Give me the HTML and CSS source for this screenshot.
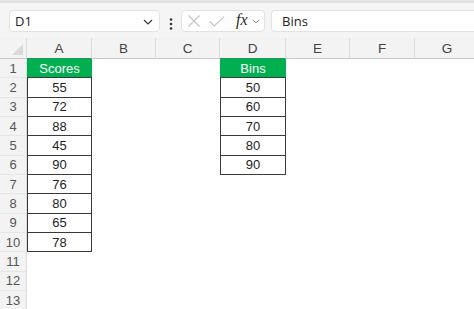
FILE: index.html
```html
<!DOCTYPE html>
<html>
<head>
<meta charset="utf-8">
<link rel="stylesheet" href="styles.css">
</head>
<body>
<div class="app">
  <div class="strip"></div>
  <div class="toolbar">
    <div class="namebox">
      <span class="name">D1</span>
      <svg class="chev" width="10" height="6" viewBox="0 0 10 6"><path d="M1 1 L5 5 L9 1" fill="none" stroke="#3a3a3a" stroke-width="1.2"/></svg>
    </div>
    <svg class="dots" width="4" height="12" viewBox="0 0 4 12"><circle cx="2" cy="1.5" r="1.3" fill="#333"/><circle cx="2" cy="6" r="1.3" fill="#333"/><circle cx="2" cy="10.5" r="1.3" fill="#333"/></svg>
    <div class="fxbox">
      <svg class="ico" width="14" height="12" viewBox="0 0 14 12"><path d="M1.5 0.5 L12.5 11.5 M12.5 0.5 L1.5 11.5" fill="none" stroke="#c4c4c4" stroke-width="1.1"/></svg>
      <svg class="ico" width="16" height="11" viewBox="0 0 16 11"><path d="M0.8 5.5 L5.2 10 L15.2 0.6" fill="none" stroke="#c4c4c4" stroke-width="1.1"/></svg>
      <span class="fx">fx</span>
      <svg class="smallchev" width="8" height="5" viewBox="0 0 8 5"><path d="M0.7 0.7 L4 4 L7.3 0.7" fill="none" stroke="#9a9a9a" stroke-width="1"/></svg>
    </div>
    <div class="formula">Bins</div>
  </div>
  <div class="sheet">
    <div class="corner"><span class="tri"></span></div>
    <div class="ch sel">A</div><div class="ch">B</div><div class="ch">C</div><div class="ch sel">D</div><div class="ch">E</div><div class="ch">F</div><div class="ch">G</div>

    <div class="rh">1</div><div class="c h">Scores</div><div class="c"></div><div class="c"></div><div class="c h">Bins</div><div class="c"></div><div class="c"></div><div class="c"></div>
    <div class="rh">2</div><div class="c b">55</div><div class="c"></div><div class="c"></div><div class="c b">50</div><div class="c"></div><div class="c"></div><div class="c"></div>
    <div class="rh">3</div><div class="c b">72</div><div class="c"></div><div class="c"></div><div class="c b">60</div><div class="c"></div><div class="c"></div><div class="c"></div>
    <div class="rh">4</div><div class="c b">88</div><div class="c"></div><div class="c"></div><div class="c b">70</div><div class="c"></div><div class="c"></div><div class="c"></div>
    <div class="rh">5</div><div class="c b">45</div><div class="c"></div><div class="c"></div><div class="c b">80</div><div class="c"></div><div class="c"></div><div class="c"></div>
    <div class="rh">6</div><div class="c b">90</div><div class="c"></div><div class="c"></div><div class="c b">90</div><div class="c"></div><div class="c"></div><div class="c"></div>
    <div class="rh">7</div><div class="c b">76</div><div class="c"></div><div class="c"></div><div class="c"></div><div class="c"></div><div class="c"></div><div class="c"></div>
    <div class="rh">8</div><div class="c b">80</div><div class="c"></div><div class="c"></div><div class="c"></div><div class="c"></div><div class="c"></div><div class="c"></div>
    <div class="rh">9</div><div class="c b">65</div><div class="c"></div><div class="c"></div><div class="c"></div><div class="c"></div><div class="c"></div><div class="c"></div>
    <div class="rh">10</div><div class="c b">78</div><div class="c"></div><div class="c"></div><div class="c"></div><div class="c"></div><div class="c"></div><div class="c"></div>
    <div class="rh">11</div><div class="c"></div><div class="c"></div><div class="c"></div><div class="c"></div><div class="c"></div><div class="c"></div><div class="c"></div>
    <div class="rh">12</div><div class="c"></div><div class="c"></div><div class="c"></div><div class="c"></div><div class="c"></div><div class="c"></div><div class="c"></div>
    <div class="rh">13</div><div class="c"></div><div class="c"></div><div class="c"></div><div class="c"></div><div class="c"></div><div class="c"></div><div class="c"></div>
  </div>
</div>
</body>
</html>
```
FILE: styles.css
```css
* { box-sizing: border-box; }
html, body { margin: 0; padding: 0; }
body {
  width: 474px;
  height: 309px;
  overflow: hidden;
  background: #ffffff;
  font-family: "Liberation Sans", Arial, sans-serif;
}
.app { width: 474px; overflow: hidden; }
.strip {
  height: 3px;
  background: #e2e2e2;
}
.toolbar {
  height: 35px;
  background: #f5f5f5;
  display: flex;
  align-items: flex-start;
  padding: 7px 0 0 9px;
  font-family: "Open Sans", "Noto Sans", sans-serif;
  font-size: 13px;
  color: #242424;
}
.namebox {
  width: 151px;
  height: 22px;
  background: #ffffff;
  border: 1px solid #e2e2e2;
  border-radius: 4px;
  display: flex;
  align-items: center;
  justify-content: space-between;
  padding: 0 6px 0 5px;
}
.chev { margin-top: 1px; }
.dots { margin: 8px 0 0 9px; }
.fxbox {
  margin-left: 8px;
  width: 84px;
  height: 22px;
  background: #ffffff;
  border: 1px solid #e2e2e2;
  border-radius: 4px;
  display: flex;
  align-items: center;
  padding-left: 5px;
}
.ico { margin-right: 8px; }
.fx {
  font-family: "Liberation Serif", "Times New Roman", serif;
  font-style: italic;
  font-size: 16px;
  color: #2a2a2a;
  margin-left: 3px;
  margin-top: -2px;
}
.smallchev { margin-left: 4px; margin-top: 1px; }
.formula {
  margin-left: 6px;
  flex: 1;
  height: 22px;
  background: #ffffff;
  border: 1px solid #e2e2e2;
  border-right: none;
  border-radius: 4px 0 0 4px;
  display: flex;
  align-items: center;
  padding-left: 10px;
}
.sheet {
  display: grid;
  grid-template-columns: 27px 65px 64px 64px 66px 64px 65px 65px;
  grid-template-rows: 21px repeat(13, 19.33px);
  width: 480px;
}
.corner {
  background: #f3f3f3;
  border-bottom: 1px solid #c9c9c9;
  border-right: 1px solid #dcdcdc;
  position: relative;
}
.tri {
  position: absolute;
  right: 3px;
  bottom: 3px;
  width: 0;
  height: 0;
  border-left: 11px solid transparent;
  border-bottom: 11px solid #d9d9d9;
}
.ch {
  background: #f3f3f3;
  border-bottom: 1px solid #c9c9c9;
  border-right: 1px solid #dcdcdc;
  display: flex;
  align-items: center;
  justify-content: center;
  font-size: 13.5px;
  color: #444444;
  padding-top: 1px;
}
.ch.sel { border-bottom-color: #1c9b52; }
.rh {
  background: #f3f3f3;
  border-right: 1px solid #dcdcdc;
  border-bottom: 1px solid #e6e6e6;
  display: flex;
  align-items: center;
  justify-content: center;
  font-size: 13px;
  color: #555555;
}
.c {
  background: #ffffff;
  display: flex;
  align-items: center;
  justify-content: center;
  font-size: 13px;
  color: #1e1e1e;
}
.c.h {
  background: #00b050;
  color: #ffffff;
  border-bottom: 1px solid #3a3a3a;
}
.c.b {
  border-left: 1px solid #3a3a3a;
  border-right: 1px solid #3a3a3a;
  border-bottom: 1px solid #3a3a3a;
}
```
